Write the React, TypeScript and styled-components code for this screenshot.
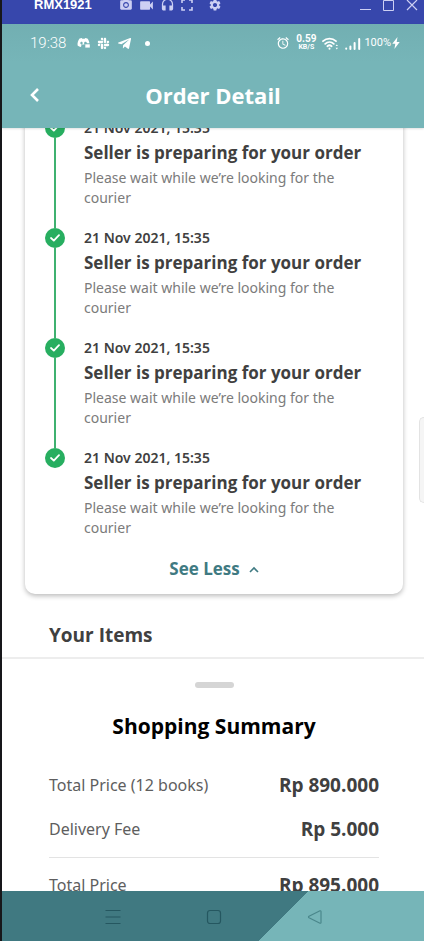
import React from 'react';
import styled, { createGlobalStyle } from 'styled-components';
import { MdAlarm, MdHeadset, MdPhotoCamera, MdSettings, MdVideocam } from 'react-icons/md';
import { FaSlack, FaTelegramPlane } from 'react-icons/fa';

const GlobalStyle = createGlobalStyle`
  *, *::before, *::after { box-sizing: border-box; }
  body {
    margin: 0;
    background: #ffffff;
    font-family: 'Noto Sans', 'Open Sans', sans-serif;
  }
  h1, h2, h3, p, ol, dl, dd { margin: 0; padding: 0; }
  button {
    padding: 0;
    border: 0;
    background: none;
    color: inherit;
    font: inherit;
    cursor: pointer;
  }
  svg { display: block; flex: none; }
`;

const Screen = styled.div`
  position: relative;
  display: flex;
  flex-direction: column;
  height: 100vh;
  overflow: hidden;
  border-left: 2px solid #17171a;
  background: #ffffff;
`;

const WindowBar = styled.div`
  display: flex;
  flex: none;
  align-items: flex-end;
  justify-content: space-between;
  height: 24px;
  padding: 0 6px 11px 32px;
  overflow: hidden;
  background: #3747ac;
  color: #ffffff;
`;

const DeviceName = styled.span`
  margin-right: 22px;
  font: bold 13px/16px 'Liberation Sans', Arial, sans-serif;
`;

const BarGroup = styled.div<{ $gap: number }>`
  display: flex;
  align-items: center;
  gap: ${({ $gap }) => $gap}px;
  height: 16px;
`;

const BarButton = styled.button<{ $spaced?: boolean }>`
  color: #cdd0f3;
  margin-left: ${({ $spaced }) => ($spaced ? '9px' : '0')};
`;

const AppHeader = styled.header`
  position: relative;
  z-index: 1;
  flex: none;
  background: #76b5b8;
  color: #ffffff;
  box-shadow: 0 1px 2px rgba(0, 0, 0, 0.12);
`;

const StatusBar = styled.div`
  display: flex;
  align-items: center;
  justify-content: space-between;
  height: 38px;
  padding: 0 24px 0 28px;
  background: linear-gradient(#72afb2, #76b5b8);
  font-family: Roboto, sans-serif;
`;

const StatusGroup = styled.div<{ $gap: number }>`
  display: flex;
  align-items: center;
  gap: ${({ $gap }) => $gap}px;
`;

const Clock = styled.span`
  margin-right: 4px;
  font-size: 15px;
  font-weight: 300;
  line-height: 20px;
`;

const Dot = styled.span`
  width: 5px;
  height: 5px;
  margin-left: 6px;
  border-radius: 50%;
  background: #ffffff;
`;

const Speed = styled.span`
  display: flex;
  flex-direction: column;
  align-items: center;
  font-size: 10px;
  font-weight: 700;
  line-height: 8px;
`;

const SpeedUnit = styled.span`
  font-size: 7px;
  line-height: 8px;
`;

const Battery = styled.span`
  display: flex;
  align-items: center;
  gap: 1px;
  font-size: 11px;
  line-height: 16px;
`;

const TitleRow = styled.div`
  display: grid;
  grid-template-columns: 66px 1fr 66px;
  align-items: center;
  height: 66px;
`;

const BackButton = styled.button`
  display: flex;
  align-items: center;
  height: 40px;
  padding-left: 26px;
`;

const PageTitle = styled.h1`
  font-family: 'Open Sans', 'Noto Sans', sans-serif;
  font-size: 22px;
  font-weight: 700;
  line-height: 28px;
  text-align: center;
`;

const OrderArea = styled.main`
  display: flex;
  flex: 1;
  flex-direction: column;
  justify-content: flex-end;
  min-height: 0;
  overflow: hidden;
`;

const TrackingCard = styled.section`
  flex: none;
  margin: 0 21px 0 23px;
  padding: 20px 20px 14px;
  border-radius: 10px;
  background: #ffffff;
  box-shadow: 0 2px 5px rgba(0, 0, 0, 0.27);
`;

const Timeline = styled.ol`
  list-style: none;
`;

const Step = styled.li`
  display: grid;
  grid-template-columns: 20px 1fr;
  column-gap: 19px;
  color: #404040;

  &:last-child > :first-child::after { display: none; }
`;

const Track = styled.div`
  display: flex;
  flex-direction: column;
  align-items: center;

  &::after {
    content: '';
    flex: 1;
    width: 2px;
    background: #3fb170;
  }
`;

const Tick = styled.span`
  display: flex;
  align-items: center;
  justify-content: center;
  width: 20px;
  height: 20px;
  border-radius: 50%;
  background: #27ae60;
`;

const StepBody = styled.div`
  display: flex;
  flex-direction: column;
  gap: 3px;
  padding-bottom: 20px;
`;

const StepDate = styled.time`
  font-size: 14px;
  font-weight: 600;
  line-height: 20px;
`;

const StepTitle = styled.h3`
  font-family: 'Open Sans', 'Noto Sans', sans-serif;
  font-size: 17px;
  font-weight: 700;
  line-height: 24px;
`;

const StepNote = styled.p`
  max-width: 270px;
  color: #7b7b7b;
  font-size: 14px;
  line-height: 20px;
`;

const SeeLess = styled.button`
  display: flex;
  align-items: center;
  gap: 9px;
  margin: 0 auto;
  color: #3f7a82;
  font-family: 'Open Sans', 'Noto Sans', sans-serif;
  font-size: 17px;
  font-weight: 700;
  line-height: 22px;
`;

const ItemsHeading = styled.h2`
  flex: none;
  padding: 28px 47px 9px;
  color: #404040;
  font-family: 'Open Sans', 'Noto Sans', sans-serif;
  font-size: 19px;
  font-weight: 700;
  line-height: 26px;
`;

const Sheet = styled.section`
  flex: none;
  height: 234px;
  padding: 23px 45px 0 47px;
  overflow: hidden;
  border-top: 2px solid #ededed;
  background: #ffffff;
`;

const Handle = styled.div`
  width: 39px;
  height: 6px;
  margin: 0 auto;
  border-radius: 3px;
  background: #d5d5d5;
`;

const SheetTitle = styled.h2`
  margin: 23px 0 28px;
  color: #000000;
  font-family: 'Open Sans', 'Noto Sans', sans-serif;
  font-size: 21px;
  font-weight: 700;
  line-height: 30px;
  text-align: center;
`;

const Costs = styled.dl`
  display: flex;
  flex-direction: column;
`;

const CostRow = styled.div<{ $total?: boolean }>`
  display: flex;
  align-items: center;
  justify-content: space-between;
  height: ${({ $total }) => ($total ? '54px' : '44px')};
  padding-bottom: ${({ $total }) => ($total ? '0' : '12px')};
  border-top: ${({ $total }) => ($total ? '1px solid #e3e3e3' : '0')};
`;

const CostLabel = styled.dt`
  color: #5e5e5e;
  font-size: 16px;
  line-height: 24px;
`;

const CostValue = styled.dd`
  color: #404040;
  font-family: 'Open Sans', 'Noto Sans', sans-serif;
  font-size: 19px;
  font-weight: 700;
  line-height: 28px;
`;

const NavBar = styled.nav`
  display: flex;
  flex: none;
  justify-content: center;
  height: 50px;
  padding-left: 2px;
  background: linear-gradient(135deg, #407981 65%, #76b5b8 65%);
`;

const NavButton = styled.button`
  display: flex;
  align-items: center;
  justify-content: center;
  width: 24%;
  padding-top: 2px;
  color: #255760;
`;

const EdgePanel = styled.div`
  position: absolute;
  top: 417px;
  right: 0;
  width: 5px;
  height: 86px;
  border: 1px solid #e3e3e3;
  border-right: 0;
  border-radius: 5px 0 0 5px;
  background: #f5f5f5;
`;

const steps = [1, 2, 3, 4];

const costs = [
  { label: 'Total Price (12 books)', value: 'Rp 890.000' },
  { label: 'Delivery Fee', value: 'Rp 5.000' },
  { label: 'Total Price', value: 'Rp 895.000', total: true },
];

const stroke = { fill: 'none', stroke: 'currentColor' } as const;

function WindowControls() {
  return (
    <WindowBar>
      <BarGroup $gap={5}>
        <DeviceName>RMX1921</DeviceName>
        <BarButton aria-label="Screenshot"><MdPhotoCamera size={14} /></BarButton>
        <BarButton aria-label="Record"><MdVideocam size={17} /></BarButton>
        <BarButton aria-label="Audio"><MdHeadset size={15} /></BarButton>
        <BarButton aria-label="Full screen">
          <svg width="14" height="14" viewBox="0 0 14 14" {...stroke} strokeWidth="1.6">
            <path d="M2 5V2h3M9 2h3v3M12 9v3H9M5 12H2V9" />
          </svg>
        </BarButton>
        <BarButton $spaced aria-label="Settings"><MdSettings size={14} /></BarButton>
      </BarGroup>
      <BarGroup $gap={12}>
        <BarButton aria-label="Minimize">
          <svg width="11" height="12" viewBox="0 0 11 12" {...stroke}><path d="M0 10.5h11" /></svg>
        </BarButton>
        <BarButton aria-label="Maximize">
          <svg width="11" height="12" viewBox="0 0 11 12" {...stroke}><path d="M.5 1.5h10v10H.5z" /></svg>
        </BarButton>
        <BarButton aria-label="Close">
          <svg width="12" height="12" viewBox="0 0 12 12" {...stroke} strokeWidth="1.2"><path d="M1 1l10 10M11 1L1 11" /></svg>
        </BarButton>
      </BarGroup>
    </WindowBar>
  );
}

function PhoneStatus() {
  return (
    <StatusBar>
      <StatusGroup $gap={7}>
        <Clock>19:38</Clock>
        <svg width="13" height="12" viewBox="0 0 13 12" fill="currentColor">
          <path d="M2.6 1.5L4.8.9l.5.9h2.4L8.2.9l2.2.6c1.2 1.4 1.8 3 2 4.7H9.9c-.2-.9-.8-1.4-1.5-1.4-.8 0-1.3.6-1.3 1.4 0 .7.3 1.2.8 1.4H4.6L4 9.9C2.6 9.7 1.5 9.2.6 8.4.3 5.9 1.1 3.5 2.6 1.5zM4.5 4.8c-.7 0-1.2.6-1.2 1.3s.5 1.3 1.2 1.3 1.2-.6 1.2-1.3-.5-1.3-1.2-1.3z" fillRule="evenodd" />
          <path d="M8.3 7.3h4.5v3.3H8.3z" />
        </svg>
        <FaSlack size={13} />
        <FaTelegramPlane size={15} />
        <Dot />
      </StatusGroup>
      <StatusGroup $gap={6}>
        <MdAlarm size={14} />
        <Speed>
          0.59
          <SpeedUnit>KB/S</SpeedUnit>
        </Speed>
        <svg width="17" height="13" viewBox="0 0 17 13" {...stroke} strokeWidth="1.8" strokeLinecap="round">
          <path d="M1 4.2a9.6 9.6 0 0 1 13 0M3.2 6.8a6.4 6.4 0 0 1 8.6 0M5.4 9.2a3.2 3.2 0 0 1 4.2 0" />
          <path d="M7.5 11.6v.1" strokeWidth="2" />
          <path d="M13.6 9l1.2-1.6L16 9zM13.6 10.8l1.2 1.6 1.2-1.6z" fill="currentColor" stroke="none" />
        </svg>
        <StatusGroup $gap={3}>
          <svg width="16" height="13" viewBox="0 0 16 13" {...stroke} strokeWidth="2" strokeLinecap="round">
            <path d="M1.2 11.5v.3M5.4 9.5v2.5M9.6 6v6M14.2 2v10" />
          </svg>
          <Battery>
            100%
            <svg width="8" height="12" viewBox="0 0 8 12" fill="currentColor">
              <path d="M5.5 0L.3 6.8h3L2.4 12 7.7 5h-3z" />
            </svg>
          </Battery>
        </StatusGroup>
      </StatusGroup>
    </StatusBar>
  );
}

function TrackingStep() {
  return (
    <Step>
      <Track>
        <Tick>
          <svg width="10" height="8" viewBox="0 0 10 8" fill="none" stroke="#ffffff" strokeWidth="1.8" strokeLinecap="round" strokeLinejoin="round">
            <path d="M1 4l2.8 2.6L9 1.2" />
          </svg>
        </Tick>
      </Track>
      <StepBody>
        <StepDate dateTime="2021-11-21T15:35">21 Nov 2021, 15:35</StepDate>
        <StepTitle>Seller is preparing for your order</StepTitle>
        <StepNote>Please wait while we’re looking for the courier</StepNote>
      </StepBody>
    </Step>
  );
}

export default function App() {
  return (
    <>
      <GlobalStyle />
      <Screen>
        <WindowControls />
        <AppHeader>
          <PhoneStatus />
          <TitleRow>
            <BackButton aria-label="Back">
              <svg width="12" height="16" viewBox="0 0 12 16" {...stroke} strokeWidth="2.6">
                <path d="M10 2L4 8l6 6" />
              </svg>
            </BackButton>
            <PageTitle>Order Detail</PageTitle>
          </TitleRow>
        </AppHeader>
        <OrderArea>
          <TrackingCard>
            <Timeline>
              {steps.map((step) => <TrackingStep key={step} />)}
            </Timeline>
            <SeeLess>
              See Less
              <svg width="10" height="7" viewBox="0 0 10 7" {...stroke} strokeWidth="1.6">
                <path d="M1 6l4-4 4 4" />
              </svg>
            </SeeLess>
          </TrackingCard>
          <ItemsHeading>Your Items</ItemsHeading>
        </OrderArea>
        <Sheet>
          <Handle />
          <SheetTitle>Shopping Summary</SheetTitle>
          <Costs>
            {costs.map(({ label, value, total }) => (
              <CostRow key={label} $total={total}>
                <CostLabel>{label}</CostLabel>
                <CostValue>{value}</CostValue>
              </CostRow>
            ))}
          </Costs>
        </Sheet>
        <NavBar>
          <NavButton aria-label="Recent apps">
            <svg width="16" height="16" viewBox="0 0 16 16" {...stroke} strokeWidth="1.2">
              <path d="M.5 1.5h15M.5 8h15M.5 14.5h15" />
            </svg>
          </NavButton>
          <NavButton aria-label="Home">
            <svg width="16" height="16" viewBox="0 0 16 16" {...stroke} strokeWidth="1.2">
              <rect x="1.5" y="1.5" width="13" height="13" rx="2.5" />
            </svg>
          </NavButton>
          <NavButton aria-label="Back">
            <svg width="16" height="16" viewBox="0 0 16 16" fill="none" stroke="#4a878b" strokeWidth="1.2" strokeLinejoin="round">
              <path d="M13 1.8L2 7.2Q1 8 2 8.8L13 14.2Q14 14.5 14 13.4V2.6Q14 1.5 13 1.8z" />
            </svg>
          </NavButton>
        </NavBar>
        <EdgePanel />
      </Screen>
    </>
  );
}
